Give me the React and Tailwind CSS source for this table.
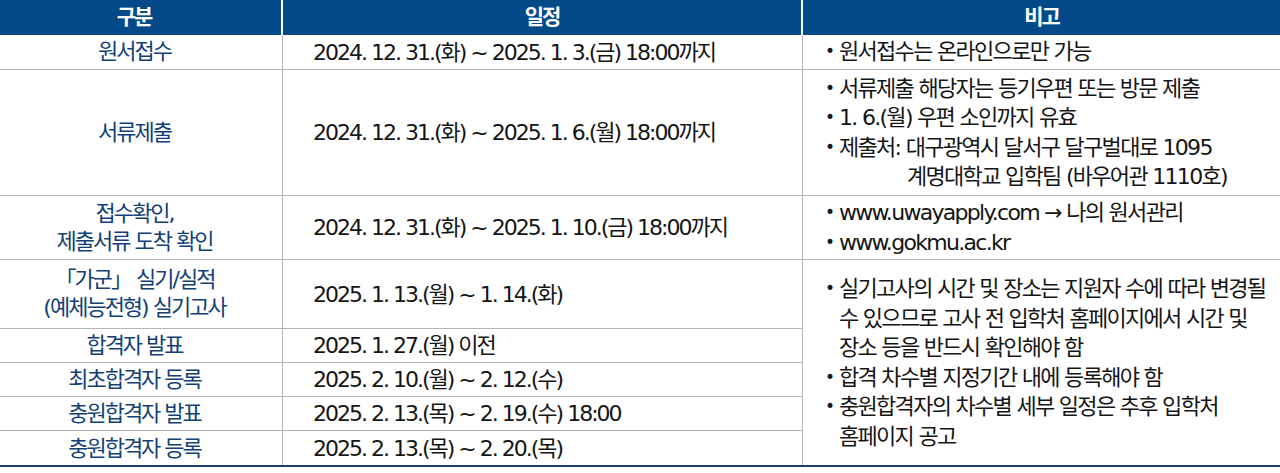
import React from "react";

const Label = ({ children }) => (
  <div className="flex flex-col items-center justify-center border-b border-r border-[#b4b4b4] pr-[13px] text-center leading-[28px] text-[#133f77]">
    {children}
  </div>
);

const Date = ({ children, last }) => (
  <div
    className={`flex items-center border-r border-[#b4b4b4] pl-[30px] text-[#151515] ${
      last ? "" : "border-b"
    }`}
  >
    {children}
  </div>
);

const Bullet = ({ lines }) => (
  <div className="flex">
    <span className="w-[14px] shrink-0 text-[17px]">•</span>
    <div>
      {lines.map((line, i) => (
        <div key={i} className={line.indent ? "pl-[68px]" : ""}>
          {line.text || line}
        </div>
      ))}
    </div>
  </div>
);

const Notes = ({ items, className = "" }) => (
  <div
    className={`flex flex-col justify-center pl-[22px] leading-[29.5px] tracking-[-1.7px] text-[#151515] ${className}`}
  >
    {items.map((lines, i) => (
      <Bullet key={i} lines={lines} />
    ))}
  </div>
);

export default function App() {
  return (
    <div className="min-h-screen bg-white">
      <div className="grid w-[1280px] grid-cols-[283px_520px_477px] grid-rows-[35px_35px_126px_64px_69px_34px_34px_34px_34px] border-b-2 border-[#1c3e6d] font-['DejaVu_Sans','Noto_Sans_CJK_KR',sans-serif] text-[22px] tracking-[-2px]">
        {/* header */}
        <div className="flex items-center justify-center border-r-2 border-white bg-[#044a88] pr-[13px] text-[21px] font-bold text-white">
          구분
        </div>
        <div className="flex items-center justify-center border-r-2 border-white bg-[#044a88] text-[21px] font-bold text-white">
          일정
        </div>
        <div className="flex items-center justify-center bg-[#044a88] text-[21px] font-bold text-white">
          비고
        </div>

        {/* 원서접수 */}
        <Label>원서접수</Label>
        <Date>2024. 12. 31.(화) ~ 2025. 1. 3.(금) 18:00까지</Date>
        <Notes className="border-b border-[#b4b4b4]" items={[["원서접수는 온라인으로만 가능"]]} />

        {/* 서류제출 */}
        <Label>서류제출</Label>
        <Date>2024. 12. 31.(화) ~ 2025. 1. 6.(월) 18:00까지</Date>
        <Notes
          className="border-b border-[#b4b4b4]"
          items={[
            ["서류제출 해당자는 등기우편 또는 방문 제출"],
            ["1. 6.(월) 우편 소인까지 유효"],
            [
              "제출처: 대구광역시 달서구 달구벌대로 1095",
              { text: "계명대학교 입학팀 (바우어관 1110호)", indent: true },
            ],
          ]}
        />

        {/* 접수확인 */}
        <Label>
          <span>접수확인,</span>
          <span>제출서류 도착 확인</span>
        </Label>
        <Date>2024. 12. 31.(화) ~ 2025. 1. 10.(금) 18:00까지</Date>
        <Notes
          className="border-b border-[#b4b4b4]"
          items={[["www.uwayapply.com → 나의 원서관리"], ["www.gokmu.ac.kr"]]}
        />

        {/* 실기고사 */}
        <Label>
          <span>「가군」 실기/실적</span>
          <span>(예체능전형) 실기고사</span>
        </Label>
        <Date>2025. 1. 13.(월) ~ 1. 14.(화)</Date>
        <Notes
          className="row-span-5"
          items={[
            [
              "실기고사의 시간 및 장소는 지원자 수에 따라 변경될",
              "수 있으므로 고사 전 입학처 홈페이지에서 시간 및",
              "장소 등을 반드시 확인해야 함",
            ],
            ["합격 차수별 지정기간 내에 등록해야 함"],
            ["충원합격자의 차수별 세부 일정은 추후 입학처", "홈페이지 공고"],
          ]}
        />

        <Label>합격자 발표</Label>
        <Date>2025. 1. 27.(월) 이전</Date>

        <Label>최초합격자 등록</Label>
        <Date>2025. 2. 10.(월) ~ 2. 12.(수)</Date>

        <Label>충원합격자 발표</Label>
        <Date>2025. 2. 13.(목) ~ 2. 19.(수) 18:00</Date>

        <div className="flex items-center justify-center border-r border-[#b4b4b4] pr-[13px] text-[#133f77]">
          충원합격자 등록
        </div>
        <Date last>2025. 2. 13.(목) ~ 2. 20.(목)</Date>
      </div>
    </div>
  );
}
